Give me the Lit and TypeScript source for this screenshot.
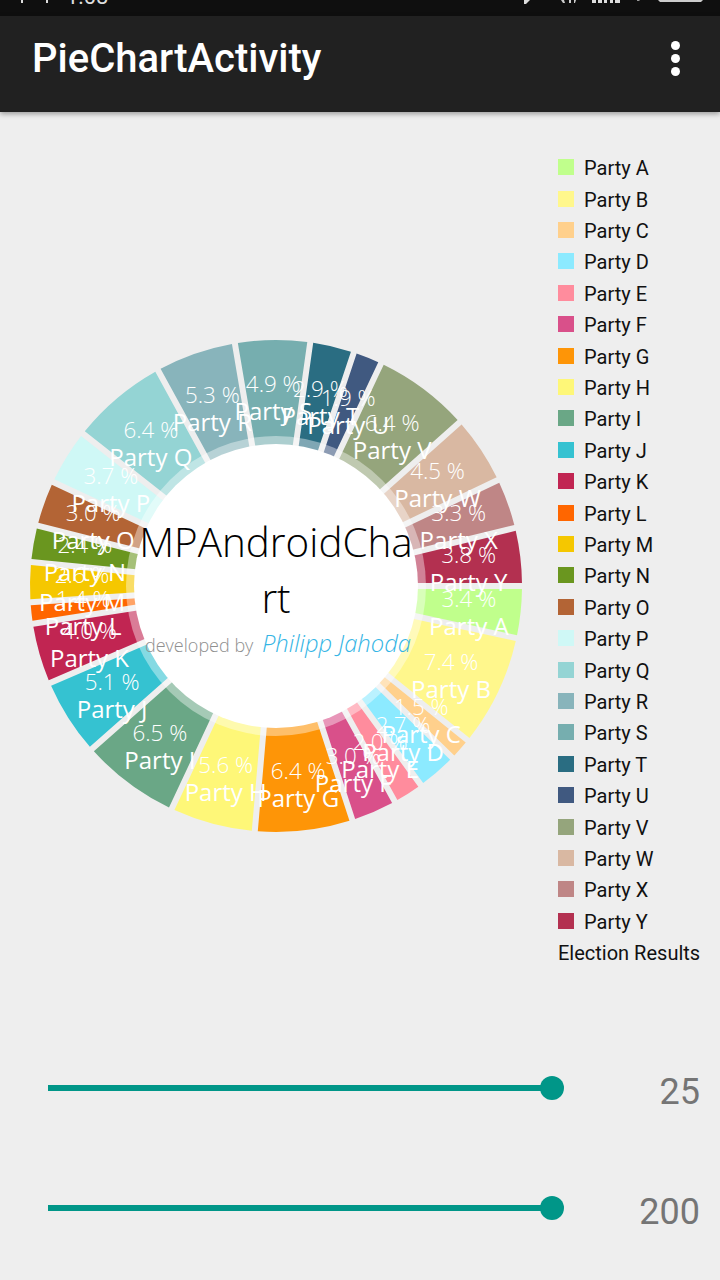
import { LitElement, html, css, svg } from "lit";
import { customElement } from "lit/decorators.js";

const SLICES: [string, number, string][] = [
  ["A", 3.4, "rgb(192,255,140)"], ["B", 7.4, "rgb(255,247,140)"], ["C", 1.5, "rgb(255,208,140)"],
  ["D", 2.7, "rgb(140,234,255)"], ["E", 2.0, "rgb(255,140,157)"], ["F", 3.0, "rgb(217,80,138)"],
  ["G", 6.4, "rgb(254,149,7)"], ["H", 5.6, "rgb(254,247,120)"], ["I", 6.5, "rgb(106,167,134)"],
  ["J", 5.1, "rgb(53,194,209)"], ["K", 4.0, "rgb(193,37,82)"], ["L", 1.4, "rgb(255,102,0)"],
  ["M", 2.6, "rgb(245,199,0)"], ["N", 2.4, "rgb(106,150,31)"], ["O", 3.0, "rgb(179,100,53)"],
  ["P", 3.7, "rgb(207,248,246)"], ["Q", 6.4, "rgb(148,212,212)"], ["R", 5.3, "rgb(136,180,187)"],
  ["S", 4.9, "rgb(118,174,175)"], ["T", 2.9, "rgb(42,109,130)"], ["U", 1.9, "rgb(64,89,128)"],
  ["V", 6.4, "rgb(149,165,124)"], ["W", 4.5, "rgb(217,184,162)"], ["X", 3.3, "rgb(191,134,134)"],
  ["Y", 3.8, "rgb(179,48,80)"],
];

const CX = 276, CY = 586, R = 246, HOLE = 142, RING = 150, GAP = 6;
const TOTAL = SLICES.reduce((a, s) => a + s[1], 0);

function pt(r: number, a: number): string {
  return `${(CX + r * Math.cos(a)).toFixed(2)} ${(CY + r * Math.sin(a)).toFixed(2)}`;
}

function slicePath(a0: number, a1: number): string {
  const tO = GAP / 2 / R, tI = GAP / 2 / (HOLE - 6);
  const large = a1 - a0 > Math.PI ? 1 : 0;
  return `M${pt(R, a0 + tO)}A${R} ${R} 0 ${large} 1 ${pt(R, a1 - tO)}L${pt(HOLE - 6, a1 - tI)}A${HOLE - 6} ${HOLE - 6} 0 ${large} 0 ${pt(HOLE - 6, a0 + tI)}Z`;
}

@customElement("app-root")
export class AppRoot extends LitElement {
  static styles = css`
    :host { display: block; width: 720px; height: 1280px; background: #eeeeee; overflow: hidden; font-family: Roboto, sans-serif; }
    .status { height: 16px; background: #0f0f0f; display: flex; justify-content: space-between; overflow: hidden; }
    .status svg { display: block; }
    .bar { height: 96px; background: #212121; display: flex; align-items: center; justify-content: space-between; padding: 0 40px 0 32px; box-shadow: 0 2px 5px rgba(0,0,0,.35); position: relative; box-sizing: border-box; }
    .title { color: #fff; font-size: 40px; font-weight: 500; margin-top: -11px; }
    .menu { display: flex; flex-direction: column; gap: 4px; margin-top: -11px; }
    .menu i { width: 9px; height: 9px; border-radius: 50%; background: #fff; display: block; }
    .main { height: 888px; display: flex; position: relative; }
    .chart { width: 540px; height: 888px; flex: none; display: block; }
    .legend { padding: 40.4px 0 0 18px; display: flex; flex-direction: column; }
    .item { height: 31.42px; display: flex; align-items: center; gap: 10px; font-size: 20px; color: #111; white-space: nowrap; }
    .sw { width: 16px; height: 16px; flex: none; margin-top: -2px; }
    .sliders { padding-top: 64px; display: flex; flex-direction: column; gap: 72px; }
    .row { height: 48px; display: flex; align-items: center; padding: 0 20px 0 48px; }
    .track { width: 504px; height: 6px; background: #009688; position: relative; flex: none; }
    .thumb { position: absolute; right: -12px; top: -9px; width: 24px; height: 24px; border-radius: 50%; background: #009688; }
    .val { flex: 1; text-align: right; font-size: 36px; color: #757575; margin-top: 8px; }
    text { font-family: "Open Sans", sans-serif; }
    text.stime { font-family: Roboto, sans-serif; font-size: 22px; fill: #ddd; }
    .pv { font-size: 22.4px; font-weight: 300; fill: #fff; text-anchor: middle; }
    .pl { font-size: 24px; font-weight: 400; fill: #fff; text-anchor: middle; }
    .c1 { font-size: 40.4px; font-weight: 300; fill: #000; text-anchor: middle; }
    .c2 { font-size: 18px; font-weight: 300; fill: #8f8f8f; }
    .c3 { font-size: 23.8px; font-weight: 300; font-style: italic; fill: #35b5e5; }
  `;

  render() {
    let acc = 0;
    const parts = SLICES.map(([n, v, c]) => {
      const a0 = (acc / TOTAL) * 2 * Math.PI;
      acc += v;
      const a1 = (acc / TOTAL) * 2 * Math.PI;
      return { n, v, c, a0, a1, mid: (a0 + a1) / 2 };
    });
    const pos = R - (R - HOLE) / 2;
    return html`
      <div class="status">
        <svg width="130" height="16" viewBox="0 0 130 16">
          <rect x="21" y="0" width="2" height="3" fill="#ddd"></rect>
          <rect x="46" y="0" width="2" height="3" fill="#ddd"></rect>
          <text class="stime" x="66" y="4">1:08</text>
        </svg>
        <svg width="210" height="16" viewBox="510 0 210 16">
          <path d="M524 0h6l-4 4h-2z" fill="#ddd"></path>
          <path d="M561 0h3l1 3h-2zM569 0h2v3h-2zM574 0h2l-1 3h-1z" fill="#ccc"></path>
          <path d="M592 0h4v3h-4zM598 0h4v3h-4zM604 0h3v3h-3zM610 0h3v3h-3zM615 0h5v3h-5z" fill="#ddd"></path>
          <path d="M637 0h3l-1 1h-2z" fill="#999"></path>
          <path d="M658 0h45l-2 2h-41z" fill="#ccc"></path>
        </svg>
      </div>
      <div class="bar">
        <div class="title">PieChartActivity</div>
        <div class="menu"><i></i><i></i><i></i></div>
      </div>
      <div class="main">
        <svg class="chart" viewBox="0 112 540 888">
          ${parts.map((p) => svg`<path d=${slicePath(p.a0, p.a1)} fill=${p.c}></path>`)}
          <circle cx=${CX} cy=${CY} r=${RING} fill="#fff" fill-opacity="0.4"></circle>
          <circle cx=${CX} cy=${CY} r=${HOLE} fill="#fff"></circle>
          ${parts.map((p) => {
            const x = CX + pos * Math.cos(p.mid), y = CY + pos * Math.sin(p.mid);
            return svg`<text class="pv" x=${x} y=${y}>${p.v.toFixed(1)} %</text>
              <text class="pl" x=${x} y=${y + 28}>Party ${p.n}</text>`;
          })}
          <text class="c1" x="276" y="557">MPAndroidCha</text>
          <text class="c1" x="276" y="613">rt</text>
          <text class="c2" x="145" y="652">developed by</text>
          <text class="c3" x="262" y="652">Philipp Jahoda</text>
        </svg>
        <div class="legend">
          ${SLICES.map(([n, , c]) => html`<div class="item"><span class="sw" style="background:${c}"></span>Party ${n}</div>`)}
          <div class="item">Election Results</div>
        </div>
      </div>
      <div class="sliders">
        <div class="row"><div class="track"><div class="thumb"></div></div><div class="val">25</div></div>
        <div class="row"><div class="track"><div class="thumb"></div></div><div class="val">200</div></div>
      </div>
    `;
  }
}
